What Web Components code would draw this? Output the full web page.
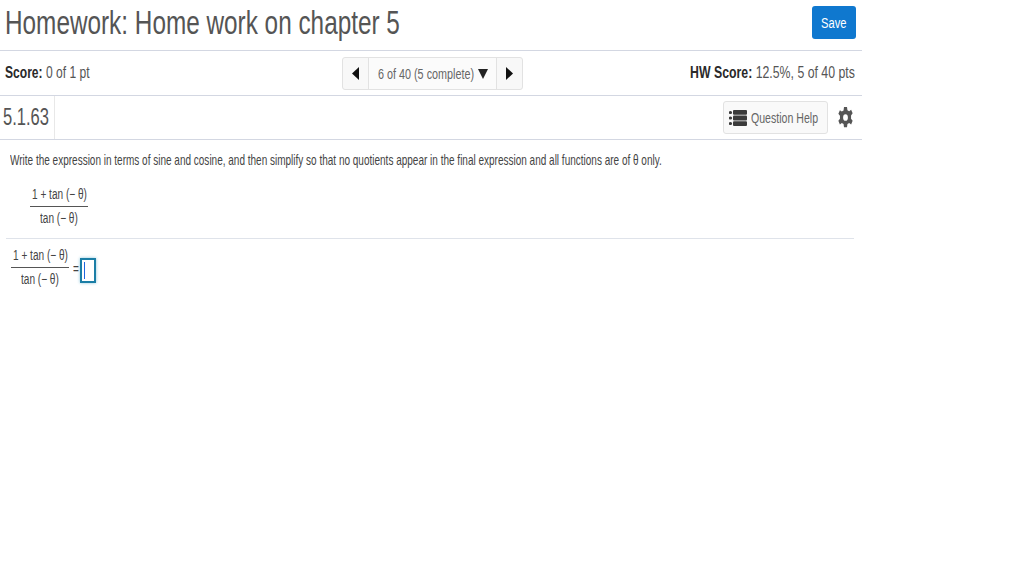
<!doctype html>
<html>
<head>
<meta charset="utf-8">
<title>Homework</title>
<style>
  html, body { margin: 0; background: #fff; }
  body { font-family: "Liberation Sans", Arial, sans-serif; }
</style>
</head>
<body>
<hw-page>
  <hw-header title-text="Homework: Home work on chapter 5"></hw-header>
  <hw-status></hw-status>
  <hw-toolbar number="5.1.63"></hw-toolbar>
  <hw-question>
    <p><hw-sq>Write the expression in terms of sine and cosine, and then simplify so that no quotients appear in the final expression and all functions are of θ only.</hw-sq></p>
    <div slot="given"><hw-frac num="1 + tan (&#8722; θ)" den="tan (&#8722; θ)"></hw-frac></div>
    <div slot="answer">
      <hw-frac num="1 + tan (&#8722; θ)" den="tan (&#8722; θ)"></hw-frac>
      <span class="eq"><hw-sq>=</hw-sq></span>
      <hw-answer-box></hw-answer-box>
    </div>
  </hw-question>
</hw-page>

<script>
// The reference text is narrowed horizontally, hw-sq does that and keeps the flow width right.
const SQUEEZE = 0.72;

class HwSq extends HTMLElement {
  constructor() {
    super();
    this.attachShadow({ mode: 'open' });
    this.shadowRoot.innerHTML = `
      <style>
        :host { display: inline-block; white-space: nowrap; }
        span { display: inline-block; transform: scaleX(${SQUEEZE}); transform-origin: 0 0; }
      </style>
      <span><slot></slot></span>
    `;
  }

  connectedCallback() {
    const width = this.shadowRoot.querySelector('span').getBoundingClientRect().width;
    this.style.width = `${width}px`;
  }
}

class HwPage extends HTMLElement {
  constructor() {
    super();
    this.attachShadow({ mode: 'open' });
    this.shadowRoot.innerHTML = `
      <style>
        :host { display: block; width: 862px; color: #555; }
      </style>
      <slot></slot>
    `;
  }
}

class HwHeader extends HTMLElement {
  constructor() {
    super();
    this.attachShadow({ mode: 'open' });
    this.shadowRoot.innerHTML = `
      <style>
        :host {
          display: flex;
          align-items: flex-start;
          justify-content: space-between;
          box-sizing: border-box;
          height: 51px;
          padding: 6px 6px 0 5px;
          border-bottom: 1px solid #d3d7e2;
        }
        h1 { margin: -1px 0 0; font-size: 33.8px; line-height: 34px; font-weight: 400; color: #555; }
        button {
          width: 44px;
          height: 33px;
          border: 0;
          border-radius: 3px;
          background: #0f78cf;
          color: #fff;
          font: 15.5px "Liberation Sans", Arial, sans-serif;
          padding: 0;
        }
      </style>
      <h1><hw-sq>${this.getAttribute('title-text')}</hw-sq></h1>
      <button type="button"><hw-sq>Save</hw-sq></button>
    `;
  }
}

class HwStatus extends HTMLElement {
  constructor() {
    super();
    this.attachShadow({ mode: 'open' });
    this.shadowRoot.innerHTML = `
      <style>
        :host {
          display: grid;
          grid-template-columns: 1fr auto 1fr;
          align-items: center;
          box-sizing: border-box;
          height: 45px;
          padding: 0 7px 0 5px;
          border-bottom: 1px solid #d3d7e2;
          font-size: 16.8px;
        }
        b { color: #2a2a2a; }
        .right { text-align: right; font-size: 17.1px; }
        .nav {
          display: flex;
          align-items: stretch;
          height: 33px;
          margin-left: 5px;
          box-sizing: border-box;
          border: 1px solid #e2e2e2;
          border-radius: 3px;
          background: #f8f8f8;
          font-size: 15px;
          color: #666;
        }
        .nav > div { display: flex; align-items: center; justify-content: center; }
        .arrow { width: 25px; }
        .nav > .label {
          justify-content: flex-start;
          width: 129px;
          box-sizing: border-box;
          padding-left: 9px;
          gap: 4px;
          background: #fbfbfb;
          border: solid #e2e2e2;
          border-width: 0 1px;
        }
        .label svg { margin-top: 2px; }
        svg { display: block; }
      </style>
      <div><hw-sq><b>Score:</b> 0 of 1 pt</hw-sq></div>
      <div class="nav">
        <div class="arrow"><svg width="7" height="13" viewBox="0 0 7 13"><path d="M7 0V13L0 6.500Z" fill="#111"/></svg></div>
        <div class="label"><hw-sq>6 of 40 (5 complete)</hw-sq>
          <svg width="10" height="10" viewBox="0 0 10 10"><path d="M0 0H10L5 10Z" fill="#222"/></svg>
        </div>
        <div class="arrow"><svg width="7" height="13" viewBox="0 0 7 13"><path d="M0 0V13L7 6.500Z" fill="#111"/></svg></div>
      </div>
      <div class="right"><hw-sq><b>HW Score:</b> 12.5%, 5 of 40 pts</hw-sq></div>
    `;
  }
}

class HwToolbar extends HTMLElement {
  constructor() {
    super();
    this.attachShadow({ mode: 'open' });
    this.shadowRoot.innerHTML = `
      <style>
        :host {
          display: flex;
          align-items: stretch;
          box-sizing: border-box;
          height: 44px;
          border-bottom: 1px solid #d3d7e2;
        }
        .num {
          width: 55px;
          box-sizing: border-box;
          padding-left: 3px;
          border-right: 1px solid #e8e8e8;
          font-size: 23px;
          line-height: 42px;
          color: #555;
        }
        .tools { margin-left: auto; display: flex; align-items: center; padding-right: 9px; gap: 10px; }
        .help {
          display: flex;
          align-items: center;
          gap: 4px;
          width: 105px;
          height: 33px;
          box-sizing: border-box;
          padding-left: 5px;
          border: 1px solid #e2e2e2;
          border-radius: 3px;
          background: #f9f9f9;
          font-size: 14.7px;
          color: #666;
        }
        svg { display: block; }
      </style>
      <div class="num"><hw-sq>${this.getAttribute('number')}</hw-sq></div>
      <div class="tools">
        <div class="help">
          <svg width="18" height="16" viewBox="0 0 18 16" fill="#3a3a3a">
            <circle cx="1.500" cy="2.500" r="1.600"/><circle cx="1.500" cy="8" r="1.600"/><circle cx="1.500" cy="13.500" r="1.600"/>
            <rect x="4" y="0" width="14" height="4.800" rx="1"/><rect x="4" y="5.600" width="14" height="4.800" rx="1"/><rect x="4" y="11.200" width="14" height="4.800" rx="1"/>
          </svg>
          <hw-sq>Question Help</hw-sq>
        </div>
        <svg width="15" height="21" viewBox="0 0 20 20" preserveAspectRatio="none">
          <path fill="#555" fill-rule="evenodd" d="M8 0h4l.6 3 2.300 1 2.600-1.400 2 3.400-2.100 2v3.200l2.100 2-2 3.400-2.600-1.400-2.300 1-.6 3H8l-.6-3-2.300-1-2.600 1.400-2-3.400 2.100-2V8.400L.5 6.400l2-3.400L5.100 4.400l2.300-1zM10 6.800a3.200 3.200 0 1 0 0 6.400 3.200 3.200 0 0 0 0-6.400z"/>
        </svg>
      </div>
    `;
  }
}

class HwQuestion extends HTMLElement {
  constructor() {
    super();
    this.attachShadow({ mode: 'open' });
    this.shadowRoot.innerHTML = `
      <style>
        :host { display: block; font-size: 13.9px; color: #444; }
        .text { padding: 12px 0 0 10px; line-height: 16px; }
        ::slotted(p) { margin: 0; }
        .given { box-sizing: border-box; height: 70px; padding: 18px 0 0 30px; }
        .rule { margin: 0 8px 0 6px; border-top: 1px solid #dfe3ea; }
        .answer { padding: 8px 0 0 11px; }
      </style>
      <div class="text"><slot></slot></div>
      <div class="given"><slot name="given"></slot></div>
      <div class="rule"></div>
      <div class="answer"><slot name="answer"></slot></div>
    `;
    this.querySelector('[slot="answer"]').style.cssText = 'display:flex;align-items:center';
    this.querySelector('.eq').style.cssText = 'margin:4px 1px 0 4px;font-size:14px';
  }
}

class HwFrac extends HTMLElement {
  constructor() {
    super();
    this.attachShadow({ mode: 'open' });
    this.shadowRoot.innerHTML = `
      <style>
        :host {
          display: inline-flex;
          flex-direction: column;
          align-items: center;
          width: 58px;
          font-size: 14px;
          line-height: 16px;
          color: #444;
        }
        .num { padding-bottom: 4px; }
        .den { padding-top: 3px; width: 100%; text-align: center; border-top: 1px solid #555; }
      </style>
      <div class="num"><hw-sq>${this.getAttribute('num')}</hw-sq></div>
      <div class="den"><hw-sq>${this.getAttribute('den')}</hw-sq></div>
    `;
  }
}

class HwAnswerBox extends HTMLElement {
  constructor() {
    super();
    this.attachShadow({ mode: 'open' });
    this.shadowRoot.innerHTML = `
      <style>
        :host {
          display: block;
          box-sizing: border-box;
          width: 16px;
          height: 25px;
          margin-top: 7px;
          border: 2px solid #1b7ea6;
          box-shadow: 0 0 3px #8cc4da;
          padding: 2px 0 2px 2px;
        }
        div { width: 1px; height: 100%; background: #1f66e0; }
      </style>
      <div></div>
    `;
  }
}

customElements.define('hw-page', HwPage);
customElements.define('hw-header', HwHeader);
customElements.define('hw-status', HwStatus);
customElements.define('hw-toolbar', HwToolbar);
customElements.define('hw-question', HwQuestion);
customElements.define('hw-frac', HwFrac);
customElements.define('hw-answer-box', HwAnswerBox);
// last: every hw-sq then measures with the final inherited font
customElements.define('hw-sq', HwSq);
</script>
</body>
</html>
